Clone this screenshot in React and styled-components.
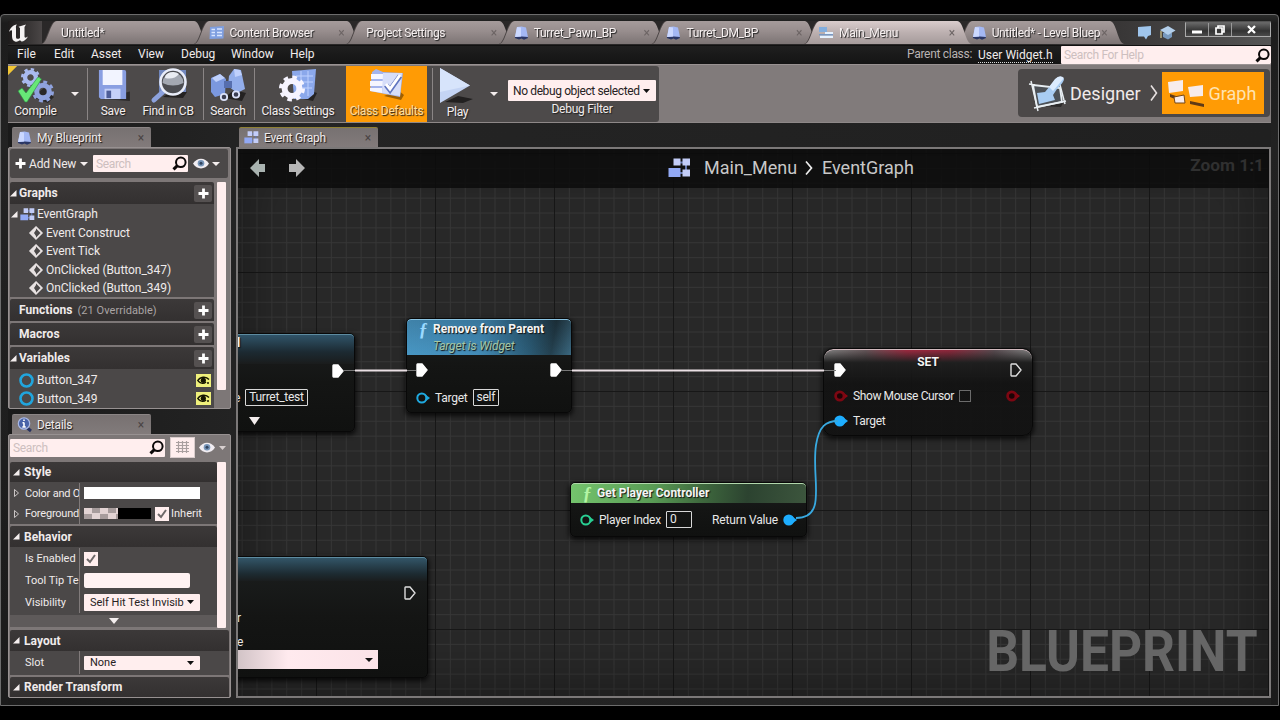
import { createGlobalStyle, styled } from 'styled-components';

const GlobalStyle = createGlobalStyle`
  * {
    box-sizing: border-box;
  }

  body {
    margin: 0;
    background: #000;
    overflow: hidden;
    font-family: Roboto, 'Liberation Sans', sans-serif;
    font-size: 12px;
    color: #f0ebeb;
  }

  svg {
    display: block;
    flex: none;
    overflow: visible;
  }
`;

const Screen = styled.div`
  width: 1280px;
  height: 720px;
  padding-top: 14px;
  background: #000;
`;

const Window = styled.div`
  width: 1279px;
  height: 692px;
  border: 1px solid #6c6c6c;
  border-radius: 4px 4px 0 0;
  background: linear-gradient(#2b2c2b, #1c1c1c 8px, #222 130px, #1b1b1b);
  padding: 6px 7px 0 7px;
  display: flex;
  flex-direction: column;
`;

/* title bar */

const TitleBar = styled.div`
  height: 24px;
  display: flex;
  align-items: flex-end;
  padding-bottom: 1px;
  background: linear-gradient(90deg, #2a2828 1020px, #3a3838 1120px, #555 1262px);
`;

const LogoBox = styled.div`
  width: 34px;
  height: 23px;
  padding: 3px 0 0 1px;
  background: linear-gradient(90deg, #1d1b1b, #4a4646);
`;

const TabEdge = styled.div`
  flex: none;
  width: 167px;
  height: 23px;
  margin-right: -14.4px;
  position: relative;
  z-index: ${(p) => (p.$active ? 2 : 0)};
  filter: drop-shadow(-1px 0 0 #4b4545);
`;

const TabShape = styled.div`
  height: 23px;
  padding: 0 14px 0 ${(p) => (p.$plain ? 19 : 14)}px;
  display: flex;
  align-items: center;
  clip-path: path('M0 23 C6 22 8 0 15 0 H152 C159 0 160 23 167 23 Z');
  background: ${(p) =>
    p.$active
      ? 'linear-gradient(#d9cccc, #bcb0b0 50%, #a59b9b)'
      : 'linear-gradient(#a59b9b, #978d8d 45%, #7c7474)'};
`;

const TabTitle = styled.span`
  flex: 1;
  overflow: hidden;
  white-space: nowrap;
  letter-spacing: -0.35px;
  line-height: 20px;
  margin-left: ${(p) => (p.$icon ? 5 : 0)}px;
  color: #f6f0f0;
  text-shadow: 1px 1px 1px #222;
`;

const TabClose = styled.span`
  color: #6c6464;
  margin: 0 3px 0 1px;
`;

const TitleIcons = styled.div`
  display: flex;
  gap: 8px;
  margin: 0 0 4px 27px;
`;

const WindowButtons = styled.div`
  display: grid;
  grid-template-columns: 23px 23px 38px;
  height: 15px;
  margin: 0 0 7px auto;
  border: 1px solid #aaa;
  border-top-color: #666;
  background: linear-gradient(#666, #333 60%, #4a4a4a);
`;

const WindowButton = styled.div`
  display: flex;
  align-items: center;
  justify-content: center;
  border-right: 1px solid #999;

  &:last-child {
    border-right: none;
  }
`;

/* menu */

const MenuBar = styled.div`
  height: 19px;
  display: flex;
  align-items: center;
  padding-left: 9px;
  background: linear-gradient(#1f1f1f, #141414);
  border-top: 1px solid #111;
`;

const MenuItem = styled.span`
  width: ${(p) => p.$width}px;
  margin-top: -2px;
`;

const ParentClass = styled.span`
  margin: -2px 0 0 auto;
  width: 71px;
  letter-spacing: -0.3px;
  color: #b9b3b3;
  white-space: nowrap;
`;

const ParentLink = styled.span`
  width: 75px;
  line-height: 14px;
  margin: 1px 8px 0 0;
  white-space: nowrap;
  border-bottom: 1px dotted #ddd;
`;

const SearchBox = styled.div`
  width: ${(p) => p.$width}px;
  height: ${(p) => p.$height || 17}px;
  padding: 0 1px 0 3px;
  display: flex;
  align-items: center;
  justify-content: space-between;
  background: #ffeeee;
  border-radius: 1px;
  color: #cdbfbf;
  letter-spacing: -0.35px;
`;

/* toolbar */

const Toolbar = styled.div`
  height: 59px;
  padding: 1px 1px 1px 0;
  display: flex;
  justify-content: space-between;
  background: #817b7b;
  border-top: 1px solid #999292;
  border-bottom: 1px solid #8e8888;
`;

const ToolGroup = styled.div`
  width: 651px;
  height: 56px;
  display: flex;
  align-items: stretch;
  border-radius: 0 3px 3px 0;
  background: linear-gradient(135deg, #f2c636 6px, #4d4a4a 7px);
`;

const ToolButton = styled.div`
  width: ${(p) => p.$width}px;
  margin-right: ${(p) => p.$gap || 0}px;
  display: flex;
  flex-direction: column;
  align-items: center;
  justify-content: space-between;
  padding: 2px 0 3px;
  background: ${(p) => (p.$active ? '#ff9b05' : 'transparent')};
  color: ${(p) => (p.$active ? '#ffdfa0' : '#f4eeee')};
`;

const ToolLabel = styled.span`
  line-height: 16px;
  letter-spacing: -0.25px;
  white-space: nowrap;
  text-shadow: 1px 1px 1px #222;
`;

const ToolCaret = styled.div`
  width: 24px;
  display: flex;
  align-items: center;
  justify-content: center;
`;

const Separator = styled.div`
  width: 1px;
  margin: 2px ${(p) => p.$gap || 0}px 2px 0;
  background: #8a8585;
`;

const DebugFilter = styled.div`
  padding-top: 14px;
  width: 148px;
  margin-left: 2px;
  display: flex;
  flex-direction: column;
  align-items: center;
`;

const Combo = styled.div`
  width: ${(p) => p.$width}px;
  height: ${(p) => p.$height}px;
  padding: 0 6px 0 ${(p) => p.$indent || 6}px;
  display: flex;
  align-items: center;
  justify-content: space-between;
  white-space: nowrap;
  font-size: ${(p) => p.$size || 11}px;
  letter-spacing: ${(p) => p.$spacing || 0}px;
  color: #262222;
  background: #ffeeee;
  border-radius: 1px;
`;

const ModeGroup = styled.div`
  width: 252px;
  height: 48px;
  margin-top: 3px;
  padding: 3px 6px 3px 11px;
  display: flex;
  align-items: center;
  gap: 4px;
  border-radius: 4px;
  background: #4b4848;
  font-size: 18px;
`;

const ModeLabel = styled.span`
  width: 76px;
`;

const GraphMode = styled.div`
  width: 103px;
  height: 42px;
  margin-left: auto;
  padding-left: 6px;
  display: flex;
  align-items: center;
  gap: 4px;
  background: #ff9b05;
  color: #ffe3b0;
`;

/* docked panels */

const Workspace = styled.div`
  flex: 1;
  display: flex;
  gap: 5px;
  padding: 4px 0 7px;
  background: linear-gradient(90deg, #1a1a1a, #242424 20%, #202020);
`;

const SideColumn = styled.div`
  width: 223px;
  display: flex;
  flex-direction: column;
  gap: 5px;
`;

const PanelTab = styled.div`
  width: 139px;
  height: 20px;
  margin-left: ${(p) => p.$left || 4}px;
  padding: 0 7px 0 5px;
  display: flex;
  align-items: center;
  gap: 5px;
  border-radius: 2px 2px 0 0;
  background: linear-gradient(#777171, #827b7b);
  border-top: 1px solid ${(p) => (p.$focus ? '#8f8134' : '#8b8585')};
  text-shadow: 1px 1px 1px #111;
  letter-spacing: -0.2px;
`;

const PanelClose = styled.span`
  margin-left: auto;
  color: #4a4444;
  text-shadow: none;
`;

const Panel = styled.div`
  height: ${(p) => p.$height}px;
  border: 1px solid #979191;
  background: #7d7777;
  border-radius: 2px;
  overflow: hidden;
`;

const BlueprintTools = styled.div`
  height: 29px;
  margin: 1px 2px 4px 1px;
  padding: 0 8px 0 5px;
  display: flex;
  align-items: center;
  background: #4b4848;
  border-radius: 2px;
`;

const AddNew = styled.span`
  width: 51px;
  margin-left: 3px;
  white-space: nowrap;
  letter-spacing: -0.15px;
`;

const ToolGap = styled.div`
  width: ${(p) => p.$width}px;
`;

const DetailTools = styled.div`
  height: 27px;
  padding: 0 4px 2px 1px;
  display: flex;
  align-items: center;
`;

const GridButton = styled.div`
  width: 25px;
  height: 21px;
  margin: 0 4px 0 5px;
  display: flex;
  align-items: center;
  justify-content: center;
  background: #ffeeee;
  border: 1px solid #d9cccc;
`;

const ScrollArea = styled.div`
  display: flex;
`;

const ScrollTrack = styled.div`
  width: 13px;
  padding-left: ${(p) => p.$left}px;
`;

const ScrollThumb = styled.div`
  width: 9px;
  height: ${(p) => p.$height}px;
  background: #ffeeee;
  border-radius: 1px;
`;

const List = styled.div`
  width: ${(p) => p.$width}px;
  margin-left: 1px;
`;

const Category = styled.div`
  height: ${(p) => p.$height || 22}px;
  margin-top: ${(p) => p.$gap || 0}px;
  padding: 0 2px 0 ${(p) => p.$indent || 0}px;
  display: flex;
  align-items: center;
  justify-content: space-between;
  background: linear-gradient(#3c3939, #333030);
  border-radius: 2px 2px 0 0;
  font-weight: 700;
`;

const CategoryName = styled.span`
  display: flex;
  align-items: center;
  gap: ${(p) => p.$gap || 2}px;
  letter-spacing: 0.05px;
`;

const Hint = styled.span`
  margin-left: 3px;
  font-weight: 400;
  font-size: 11px;
  color: #aaa4a4;
`;

const AddButton = styled.div`
  width: 18px;
  height: 17px;
  display: flex;
  align-items: center;
  justify-content: center;
  background: #555151;
  border-radius: 2px;
`;

const Rows = styled.div`
  height: ${(p) => p.$height}px;
  padding-top: ${(p) => p.$top || 0}px;
  overflow: hidden;
  background: #4b4848;
`;

const TreeRow = styled.div`
  height: 18.5px;
  padding: 0 3px 0 ${(p) => p.$indent}px;
  display: flex;
  align-items: center;
  gap: ${(p) => p.$gap || 3}px;
  letter-spacing: -0.05px;
`;

const Watch = styled.div`
  margin-left: auto;
  width: 15px;
  height: 13px;
  display: flex;
  align-items: center;
  justify-content: center;
  background: #eff07c;
`;

const PropRow = styled.div`
  height: ${(p) => p.$height}px;
  display: flex;
  align-items: center;
`;

const PropName = styled.div`
  width: 70px;
  height: 100%;
  padding-left: ${(p) => (p.$arrow ? 4 : 15)}px;
  display: flex;
  align-items: center;
  gap: 6px;
  overflow: hidden;
  white-space: nowrap;
  border-right: 1px solid #807a7a;
  margin-right: 4px;
  font-size: 11px;
  letter-spacing: ${(p) => (p.$arrow ? -0.2 : 0)}px;
`;

const Swatch = styled.div`
  width: 116px;
  height: 12px;
  background: #fff;
`;

const AlphaSwatch = styled.div`
  width: 34px;
  height: 11px;
  background: repeating-conic-gradient(#a79c9c 0 25%, #e2d3d3 0 50%) 0 0 / 16px 11px;
`;

const BlackSwatch = styled.div`
  width: 33px;
  height: 11px;
  background: #000;
  margin-right: 4px;
`;

const Check = styled.div`
  width: 14px;
  height: 14px;
  margin-right: 2px;
  display: flex;
  align-items: center;
  justify-content: center;
  background: #ffeeee;
`;

const TextInput = styled.div`
  width: 106px;
  height: 15px;
  border-radius: 2px;
  background: #fff2f2;
`;

const SmallText = styled.span`
  font-size: 11px;
`;

const Expander = styled.div`
  height: 12px;
  width: 207px;
  display: flex;
  align-items: center;
  justify-content: center;
  background: #5e5a5a;
`;

/* graph editor */

const GraphColumn = styled.div`
  flex: 1;
  display: flex;
  flex-direction: column;
`;

const GraphPanel = styled.div`
  flex: 1;
  border: 2px solid #7b7878;
  position: relative;
  overflow: hidden;
  background-color: #282828;
  background-image:
    linear-gradient(90deg, #171717 1px, transparent 1px),
    linear-gradient(#171717 1px, transparent 1px),
    linear-gradient(90deg, #363636 1px, transparent 1px),
    linear-gradient(#363636 1px, transparent 1px);
  background-size: 119px 119px, 119px 119px, 14.875px 14.875px, 14.875px 14.875px;
  background-position: 78px 4px;
`;

const GraphShade = styled.div`
  position: absolute;
  inset: 0;
  box-shadow: inset 0 0 50px 12px rgba(0, 0, 0, 0.3);
`;

const GraphHeader = styled.div`
  position: relative;
  height: 39px;
  display: flex;
  align-items: center;
  padding: 0 5px 2px 12px;
  background: rgba(12, 12, 12, 0.85);
  font-size: 18px;
  color: #c8c8c8;
`;

const NavArrows = styled.div`
  width: 418px;
  display: flex;
  gap: 22px;
`;

const Crumb = styled.span`
  width: ${(p) => p.$width}px;
  margin-left: ${(p) => p.$left}px;
  white-space: nowrap;
`;

const ZoomLabel = styled.span`
  margin: -5px 0 0 auto;
  font-weight: 700;
  font-size: 17.3px;
  color: #303030;
`;

const Watermark = styled.div`
  position: absolute;
  right: 11px;
  bottom: 12px;
  font-size: 57px;
  line-height: 64px;
  font-weight: 700;
  color: #666;
  transform: scaleX(0.903);
  transform-origin: right;
`;

const Wires = styled.svg`
  position: absolute;
  left: 0;
  top: 0;
`;

const Node = styled.div`
  position: absolute;
  left: ${(p) => p.$x}px;
  top: ${(p) => p.$y}px;
  width: ${(p) => p.$width}px;
  height: ${(p) => p.$height}px;
  border-radius: ${(p) => p.$radius || 5}px;
  border: 1px solid #080808;
  overflow: hidden;
  background: ${(p) => p.$fill || 'linear-gradient(#1c1f1f, #141514 50%, #101110)'};
  box-shadow: 0 2px 5px 1px rgba(0, 0, 0, 0.75);
  color: #e8e8e8;
  letter-spacing: -0.25px;
`;

const NodeHeader = styled.div`
  height: ${(p) => p.$height}px;
  padding: ${(p) => p.$top || 1}px 0 0 ${(p) => p.$indent || 0}px;
  display: flex;
  align-items: flex-start;
  justify-content: ${(p) => (p.$center ? 'center' : 'flex-start')};
  gap: 3px;
  background: ${(p) => p.$fill};
  border-radius: ${(p) => p.$radius || 4}px ${(p) => p.$radius || 4}px 0 0;
  box-shadow: inset 0 1px 0 ${(p) => p.$edge};
`;

const NodeTitle = styled.div`
  font-weight: 700;
  line-height: 17px;
  letter-spacing: 0;
  color: #f5f5f5;
  white-space: nowrap;
  text-shadow: 1px 1px 1px #111;
`;

const NodeSubtitle = styled.div`
  font-style: italic;
  line-height: 16px;
  color: #a5c6a4;
  letter-spacing: -0.15px;
  text-shadow: 1px 1px 1px #111;
`;

const FunctionMark = styled.span`
  width: 14px;
  font-family: 'Liberation Serif', serif;
  font-style: italic;
  font-weight: 700;
  font-size: 18px;
  line-height: 18px;
  text-align: center;
  color: ${(p) => p.$color};
`;

const PinRow = styled.div`
  height: ${(p) => p.$height}px;
  margin-top: ${(p) => p.$top || 0}px;
  padding: 0 ${(p) => p.$right || 9}px 0 ${(p) => p.$left || 9}px;
  display: flex;
  align-items: center;
  justify-content: ${(p) => (p.$between ? 'space-between' : 'flex-start')};
  gap: 5px;
  white-space: nowrap;
`;

const PinGroup = styled.div`
  display: flex;
  align-items: center;
  gap: 5px;
  letter-spacing: ${(p) => p.$spacing || -0.25}px;
`;

const ValueBox = styled.span`
  min-width: ${(p) => p.$width || 0}px;
  height: 17px;
  padding: 0 3px;
  line-height: 15px;
  border: 1px solid #d8d8d8;
  border-radius: 1px;
`;

const BoolBox = styled.span`
  width: 12px;
  height: 12px;
  border: 1px solid #6b6b6b;
`;

const NodeSelect = styled.div`
  width: 150px;
  height: 19px;
  margin-left: -10px;
  padding: 0 5px;
  display: flex;
  align-items: center;
  justify-content: flex-end;
  background: linear-gradient(90deg, #c9bcbf, #ffeaee 40%, #fbe3e8);
`;

/* icons */

const Caret = ({ color = '#f4eeee', width = 8, height = 4 }) => (
  <svg width={width} height={height} viewBox="0 0 8 4" preserveAspectRatio="none">
    <path d="M0 0H8L4 4Z" fill={color} />
  </svg>
);

const Expand = () => (
  <svg width="7" height="7" viewBox="0 0 7 7">
    <path d="M6.5 0V6.5H0Z" fill="#f4eeee" />
  </svg>
);

const Magnifier = () => (
  <svg width="15" height="15" viewBox="0 0 15 15" fill="none" stroke="#0c0909">
    <circle cx="8.8" cy="6.3" r="4.8" strokeWidth="2" />
    <path d="M5.4 9.6L1.5 13.4" strokeWidth="3" />
  </svg>
);

const Plus = () => (
  <svg width="11" height="11" viewBox="0 0 11 11">
    <path d="M5.5 0.5V10.5M0.5 5.5H10.5" stroke="#fff" strokeWidth="2.8" />
  </svg>
);

const Eye = () => (
  <svg width="16" height="11" viewBox="0 0 16 11">
    <path d="M0 5.5C4-1 12-1 16 5.5C12 12 4 12 0 5.5Z" fill="#f1edf2" />
    <circle cx="8" cy="5.3" r="3.3" fill="#7795b8" />
    <circle cx="8" cy="5.3" r="1.5" fill="#31445f" />
  </svg>
);

const SmallEye = () => (
  <svg width="13" height="9" viewBox="0 0 13 9">
    <path d="M0.5 5C3 0.5 9 0 12 3.5M1 5C4 8 7 8 9 6" fill="none" stroke="#151500" strokeWidth="1.4" />
    <circle cx="6.3" cy="4.3" r="2.6" fill="#151500" />
    <path d="M10 7h2" stroke="#151500" strokeWidth="1.3" />
  </svg>
);

const BookIcon = () => (
  <svg width="15" height="14" viewBox="0 0 15 14">
    <path d="M1.5 9L0.8 12L5 13.5L7.5 12.5L10 13.8L14 12L13 9Z" fill="#2b3765" />
    <path d="M3 1L7.5 0.5L12 1.5L14 11L8 10.5L1 11Z" fill="#a4b8f4" />
    <path d="M3 1L7 1.5L7 10.5L1 11Z" fill="#cbd8ff" />
  </svg>
);

const BrowserIcon = () => (
  <svg width="16" height="14" viewBox="0 0 16 14">
    <path d="M1 1L15 0L14.5 12.5L0.5 13Z" fill="#7f9fe0" />
    <path d="M2.5 3.5H6M8 3H13M2.5 6.5H6M8 6.5H13M2.5 9.5H6M8 9.5H13" stroke="#d9e5ff" strokeWidth="1.7" />
  </svg>
);

const WidgetIcon = () => (
  <svg width="15" height="13" viewBox="0 0 15 13">
    <path d="M0 1H8V6H0Z" fill="#83aede" />
    <path d="M6 6H14V8H6ZM1 9.5H14V12H1Z" fill="#e6f2ff" />
    <path d="M0 8H14V9.5H0Z" fill="#7998c2" />
  </svg>
);

const GraphIcon = ({ width = 15, height = 13 }) => (
  <svg width={width} height={height} viewBox="0 0 22 20">
    <path d="M9 4.5H20M5 15H18M17.5 4V16" stroke="#6477ad" strokeWidth="2" />
    <path d="M5 0.5H12V7.5H5ZM14 0.5H21.5V7.5H14ZM14 11.5H21.5V18.5H14Z" fill="#c3cdf8" />
    <path d="M0 10H12V19H0Z" fill="#92a9f4" />
  </svg>
);

const InfoIcon = () => (
  <svg width="15" height="15" viewBox="0 0 15 15">
    <path d="M9 10L14 14" stroke="#27325f" strokeWidth="3" />
    <circle cx="7" cy="6.5" r="5.7" fill="#4963a8" stroke="#a9b8e4" strokeWidth="1.2" />
    <path d="M7 5.5V10M7 2.6V4.1M5.5 5.8H7M5.3 10H8.8" stroke="#fff" strokeWidth="1.6" />
  </svg>
);

const EventIcon = () => (
  <svg width="14" height="14" viewBox="0 0 14 14">
    <path d="M7 1.2L12.8 7L7 12.8L1.2 7Z" fill="none" stroke="#e7e1e1" strokeWidth="1.8" />
    <path d="M7 1L1 7L7 13V10L5 7L7 4Z" fill="#e7e1e1" />
  </svg>
);

const Gear = ({ x, y, r, fill }) => (
  <g transform={`translate(${x} ${y})`}>
    <circle r={r * 0.57} fill="none" stroke={fill} strokeWidth={r * 0.46} />
    <circle r={r * 0.87} fill="none" stroke={fill} strokeWidth={r * 0.26} strokeDasharray={`${r * 0.35} ${r * 0.333}`} />
  </g>
);

const CompileIcon = () => (
  <svg width="36" height="35" viewBox="0 0 36 35">
    <path d="M14 29L30 35L36 29L26 20Z" fill="#2a2828" />
    <Gear x={12.5} y={9.5} r={9.5} fill="#a9baf0" />
    <Gear x={25} y={23.5} r={11} fill="#8fa2de" />
    <path d="M0 23L4 20L8 25L20 9L23.5 11L9 34L7 34Z" fill="#67e777" stroke="#2c8d41" strokeWidth="0.6" />
  </svg>
);

const SaveIcon = () => (
  <svg width="30" height="34" viewBox="0 0 32 34">
    <path d="M4 32L34 34V24Z" fill="#2c2a2a" />
    <path d="M1 1H28Q30 1 30 3V32H3L1 30Z" fill="#8a9fe2" />
    <path d="M5 1H26V17H5Z" fill="#f2f4ff" />
    <path d="M7 21H24V32H7Z" fill="#c5d0f8" />
    <path d="M9 23H14V31H9Z" fill="#4d5d98" />
  </svg>
);

const FindIcon = () => (
  <svg width="38" height="35" viewBox="0 0 38 35">
    <path d="M14 29L34 30L38 24L28 20Z" fill="#242222" />
    <path d="M10 2H37V24H10Z" fill="#7187bd" />
    <path d="M15 23L5 32" stroke="#8da2dd" strokeWidth="5" strokeLinecap="round" />
    <circle cx="24" cy="14" r="12.5" fill="#4c4d52" stroke="#e9edf9" strokeWidth="2.6" />
    <path d="M13.5 15A10.5 10.5 0 0 1 34.5 15Q24 20 13.5 15Z" fill="#a3a8b2" />
    <path d="M16 10A8 6 0 0 1 30 6Q25 12 16 10Z" fill="#e9ecf2" />
  </svg>
);

const SearchIcon = () => (
  <svg width="36" height="34" viewBox="0 0 36 34">
    <path d="M14 30L32 33L36 25L24 22Z" fill="#232121" />
    <path d="M1 10L10 6L16 11L15 26L5 29L1 24Z" fill="#7b98df" />
    <path d="M19 8L24 1L31 2L35 21L27 25L18 18Z" fill="#93aeeb" />
    <path d="M14 13H22V20H14Z" fill="#566eae" />
    <path d="M2 10L10 6L15 10L6 14ZM24 1L30 2L32 7L25 9Z" fill="#bfd0fc" />
    <circle cx="14" cy="29" r="3.2" fill="#3b3e52" stroke="#dbe2fa" strokeWidth="1.8" />
    <circle cx="26" cy="26.5" r="3.2" fill="#3b3e52" stroke="#dbe2fa" strokeWidth="1.8" />
  </svg>
);

const SettingsIcon = () => (
  <svg width="38" height="34" viewBox="0 0 38 34">
    <path d="M19 30L34 33L38 25L26 21Z" fill="#252323" />
    <path d="M13 3L37 1L35 26L29 31H15Z" fill="#8ba8eb" />
    <path d="M17 8H34M17 14H34M17 20H33M22 3V24M29 3V28" stroke="#bed1ff" strokeWidth="1" />
    <Gear x={13} y={20.5} r={13} fill="#f6f4ff" />
  </svg>
);

const DefaultsIcon = () => (
  <svg width="38" height="32" viewBox="0 0 38 32">
    <path d="M16 28L33 32L36 27L30 22Z" fill="#a06000" />
    <path d="M4 4L8 1L15 4L35 5L32 29L2 23Z" fill="#a3b4ed" />
    <path d="M3 6H15V11H3ZM2 13H15V18H2ZM2 20H14V25L2 23Z" fill="#f5f6ff" />
    <path d="M15 5L34 5L32 28L14 25Z" fill="#d6def9" />
    <path d="M18 17L22 22L32 8" fill="none" stroke="#5f75bf" strokeWidth="5" />
    <path d="M18 16L22 21L32 7" fill="none" stroke="#fff" strokeWidth="3" />
  </svg>
);

const PlayIcon = () => (
  <svg width="38" height="36" viewBox="0 0 38 36">
    <path d="M6 34L19 28L34 31L24 35Z" fill="#222020" />
    <path d="M1 0L31 17.5L1 35Z" fill="#c4d4f4" />
    <path d="M1 0L31 17.5L1 24Z" fill="#d7e4fb" />
  </svg>
);

const DesignerIcon = () => (
  <svg width="37" height="37" viewBox="0 0 37 37">
    <path d="M10 31L32 32L36 24Z" fill="#2c2a2a" />
    <path d="M4 10L31 13L33 27L8 32Z" fill="#4c5157" stroke="#e8eef2" strokeWidth="1.8" />
    <path d="M0 9L6 10M2 6L9 36M31 10L36 29M5 33L37 26" stroke="#e8eef2" strokeWidth="1.5" />
    <path d="M8 18L16 17L26 5Q31 -1 35 4Q35 7 28 14L24 20L26 25L10 29Z" fill="#a9cdf3" />
    <path d="M26 4Q31 -1 35 3L24 16L20 12Z" fill="#dcecff" />
  </svg>
);

const NodesIcon = () => (
  <svg width="37" height="27" viewBox="0 0 37 27">
    <path d="M2 14L8 16L7 19L2 17ZM22 21L36 24V27L22 24Z" fill="#5f3a17" />
    <path d="M0 2L15 0V11L1 13Z" fill="#f7ecec" />
    <path d="M20 7L35 5V16L22 17Z" fill="#f7ecec" />
    <path d="M6 17L16 15L17 23L7 23Z" fill="#f7ecec" stroke="#754614" strokeWidth="1" />
  </svg>
);

const ExecPin = ({ open }) => (
  <svg width="12" height="14" viewBox="0 0 12 14">
    <path
      d="M1.5 1H6L11 7L6 13H1.5Q1 13 1 12V2Q1 1 1.5 1Z"
      fill={open ? 'none' : '#fff'}
      stroke={open ? '#ddd' : '#fff'}
      strokeWidth="1.4"
    />
  </svg>
);

const DataPin = ({ color, filled, hole = '#121312' }) => (
  <svg width="14" height="12" viewBox="0 0 14 12">
    <path d="M10 3L14 6L10 9Z" fill={color} />
    <circle cx="5.8" cy="6" r="4.5" fill={filled ? color : hole} stroke={color} strokeWidth="2" />
  </svg>
);

const BoolPin = () => (
  <svg width="14" height="12" viewBox="0 0 14 12">
    <path d="M10 3L14 6L10 9Z" fill="#8e0712" />
    <circle cx="5.8" cy="6" r="4.2" fill="#1c0305" stroke="#7c0712" strokeWidth="2.8" />
  </svg>
);

const PropArrow = () => (
  <svg width="5" height="8" viewBox="0 0 5 8">
    <path d="M0.5 0.5L4.5 4L0.5 7.5Z" fill="none" stroke="#d8d2d2" strokeWidth="0.9" />
  </svg>
);

const CheckMark = () => (
  <svg width="10" height="9" viewBox="0 0 10 9">
    <path d="M1 5L4 8L9 1" fill="none" stroke="#6e6969" strokeWidth="2" />
  </svg>
);

const tabs = [
  { title: 'Untitled*', plain: true },
  { title: 'Content Browser', icon: <BrowserIcon />, close: true },
  { title: 'Project Settings', plain: true, close: true },
  { title: 'Turret_Pawn_BP', icon: <BookIcon />, close: true },
  { title: 'Turret_DM_BP', icon: <BookIcon />, close: true },
  { title: 'Main_Menu', icon: <WidgetIcon />, close: true, active: true },
  { title: 'Untitled* - Level Bluep', icon: <BookIcon />, close: true },
];

const menu = [
  ['File', 37],
  ['Edit', 37],
  ['Asset', 47],
  ['View', 43],
  ['Debug', 50],
  ['Window', 59],
  ['Help', 40],
];

const events = ['Event Construct', 'Event Tick', 'OnClicked (Button_347)', 'OnClicked (Button_349)'];

const Title = () => (
  <TitleBar>
    <LogoBox>
      <svg width="21" height="18" viewBox="0 0 21 18">
        <path
          d="M0 8C1 4 4 1 8 0.5C6.5 2 7 3 7 4.5V13C7 15 9 15.5 11 14V4L9.5 2.8L17 0.5L15.5 3V12.5C15.5 14 17 14 19 12.5C17 16 14 17.8 12.5 17.5L11 16.3C9 17.5 8 18 6 17.5C4 17 3 15 3 12V7C3 5.5 1.5 6 0 8Z"
          fill="#f5f3f3"
        />
      </svg>
    </LogoBox>
    {tabs.map((tab) => (
      <TabEdge key={tab.title} $active={tab.active}>
        <TabShape $active={tab.active} $plain={tab.plain}>
          {tab.icon}
          <TabTitle $icon={tab.icon}>{tab.title}</TabTitle>
          {tab.close && <TabClose>×</TabClose>}
        </TabShape>
      </TabEdge>
    ))}
    <TitleIcons>
      <svg width="15" height="14" viewBox="0 0 15 14">
        <path d="M1 1L14 0V9L11 10L9 13.5L7 10.5H1Z" fill="#9fc5ec" />
      </svg>
      <svg width="16" height="14" viewBox="0 0 16 14">
        <path d="M3 7V11L8 13.5L12 11V7Z" fill="#7899bd" />
        <path d="M0 4L8 0L15.5 4.5L8 9Z" fill="#b3cfeb" />
        <path d="M1 5V12" stroke="#cbbf8a" strokeWidth="1.3" />
      </svg>
    </TitleIcons>
    <WindowButtons>
      <WindowButton>
        <svg width="10" height="9" viewBox="0 0 10 9">
          <path d="M0 7H10" stroke="#fff" strokeWidth="3" />
        </svg>
      </WindowButton>
      <WindowButton>
        <svg width="10" height="10" viewBox="0 0 10 10">
          <path d="M3 2.5V1H9V7H7.5M1 3H7V9H1Z" fill="none" stroke="#fff" strokeWidth="1.7" />
        </svg>
      </WindowButton>
      <WindowButton>
        <svg width="9" height="9" viewBox="0 0 9 9">
          <path d="M1 1L8 8M8 1L1 8" stroke="#fff" strokeWidth="2.3" />
        </svg>
      </WindowButton>
    </WindowButtons>
  </TitleBar>
);

const Tools = () => (
  <Toolbar>
    <ToolGroup>
      <ToolButton $width={55}>
        <CompileIcon />
        <ToolLabel>Compile</ToolLabel>
      </ToolButton>
      <ToolCaret>
        <Caret />
      </ToolCaret>
      <Separator />
      <ToolButton $width={50}>
        <SaveIcon />
        <ToolLabel>Save</ToolLabel>
      </ToolButton>
      <ToolButton $width={60} $gap={5}>
        <FindIcon />
        <ToolLabel>Find in CB</ToolLabel>
      </ToolButton>
      <Separator />
      <ToolButton $width={48} $gap={2}>
        <SearchIcon />
        <ToolLabel>Search</ToolLabel>
      </ToolButton>
      <Separator $gap={3} />
      <ToolButton $width={80} $gap={8}>
        <SettingsIcon />
        <ToolLabel>Class Settings</ToolLabel>
      </ToolButton>
      <ToolButton $width={81} $gap={5} $active>
        <DefaultsIcon />
        <ToolLabel>Class Defaults</ToolLabel>
      </ToolButton>
      <Separator />
      <ToolButton $width={49}>
        <PlayIcon />
        <ToolLabel>Play</ToolLabel>
      </ToolButton>
      <ToolCaret>
        <Caret />
      </ToolCaret>
      <DebugFilter>
        <Combo $width={148} $height={21} $size={12} $indent={5} $spacing={-0.38}>
          No debug object selected
          <Caret color="#111" width={7} />
        </Combo>
        <ToolLabel>Debug Filter</ToolLabel>
      </DebugFilter>
    </ToolGroup>
    <ModeGroup>
      <DesignerIcon />
      <ModeLabel>Designer</ModeLabel>
      <svg width="8" height="16" viewBox="0 0 8 16">
        <path d="M1 0.5L6.5 8L1 15.5" fill="none" stroke="#e6e0e0" strokeWidth="1.6" />
      </svg>
      <GraphMode>
        <NodesIcon />
        Graph
      </GraphMode>
    </ModeGroup>
  </Toolbar>
);

const MyBlueprint = () => (
  <div>
    <PanelTab>
      <BookIcon />
      My Blueprint
      <PanelClose>×</PanelClose>
    </PanelTab>
    <Panel $height={262}>
      <BlueprintTools>
        <Plus />
        <AddNew>Add New</AddNew>
        <Caret />
        <ToolGap $width={5} />
        <SearchBox $width={95}>
          Search
          <Magnifier />
        </SearchBox>
        <ToolGap $width={5} />
        <Eye />
        <ToolGap $width={3} />
        <Caret />
      </BlueprintTools>
      <ScrollArea>
        <List $width={204}>
          <Category>
            <CategoryName>
              <Expand />
              Graphs
            </CategoryName>
            <AddButton>
              <Plus />
            </AddButton>
          </Category>
          <Rows $height={93} $top={1}>
            <TreeRow $indent={1} $gap={2}>
              <Expand />
              <GraphIcon />
              EventGraph
            </TreeRow>
            {events.map((name) => (
              <TreeRow key={name} $indent={19}>
                <EventIcon />
                {name}
              </TreeRow>
            ))}
          </Rows>
          <Category $gap={2} $indent={9}>
            <CategoryName>
              Functions
              <Hint>(21 Overridable)</Hint>
            </CategoryName>
            <AddButton>
              <Plus />
            </AddButton>
          </Category>
          <Category $gap={2} $indent={9}>
            <CategoryName>Macros</CategoryName>
            <AddButton>
              <Plus />
            </AddButton>
          </Category>
          <Category $gap={2}>
            <CategoryName>
              <Expand />
              Variables
            </CategoryName>
            <AddButton>
              <Plus />
            </AddButton>
          </Category>
          <Rows $height={39} $top={2}>
            {['Button_347', 'Button_349'].map((name) => (
              <TreeRow key={name} $indent={9}>
                <svg width="15" height="15" viewBox="0 0 15 15">
                  <circle cx="7.5" cy="7.5" r="6" fill="none" stroke="#21a5dd" strokeWidth="2.6" />
                </svg>
                {name}
                <Watch>
                  <SmallEye />
                </Watch>
              </TreeRow>
            ))}
          </Rows>
        </List>
        <ScrollTrack $left={3}>
          <ScrollThumb $height={208} />
        </ScrollTrack>
      </ScrollArea>
    </Panel>
  </div>
);

const Details = () => (
  <div>
    <PanelTab>
      <InfoIcon />
      Details
      <PanelClose>×</PanelClose>
    </PanelTab>
    <Panel $height={264}>
      <DetailTools>
        <SearchBox $width={156} $height={18}>
          Search
          <Magnifier />
        </SearchBox>
        <GridButton>
          <svg width="13" height="13" viewBox="0 0 13 13">
            <path
              d="M0 1.5H13M0 4.5H13M0 7.5H13M0 10.5H13M2.5 0V12M6.5 0V12M10.5 0V12"
              stroke="#aaa0a0"
              strokeWidth="1.2"
            />
          </svg>
        </GridButton>
        <Eye />
        <ToolGap $width={4} />
        <Caret width={7} color="#d8d0d0" />
      </DetailTools>
      <ScrollArea>
        <List $width={207}>
          <Category $height={20} $indent={3}>
            <CategoryName $gap={4}>
              <Expand />
              Style
            </CategoryName>
          </Category>
          <Rows $height={42} $top={1}>
            <PropRow $height={20.5}>
              <PropName $arrow>
                <PropArrow />
                Color and O
              </PropName>
              <Swatch />
            </PropRow>
            <PropRow $height={20.5}>
              <PropName $arrow>
                <PropArrow />
                Foreground
              </PropName>
              <AlphaSwatch />
              <BlackSwatch />
              <Check>
                <CheckMark />
              </Check>
              <SmallText>Inherit</SmallText>
            </PropRow>
          </Rows>
          <Category $height={21} $gap={2} $indent={3}>
            <CategoryName $gap={4}>
              <Expand />
              Behavior
            </CategoryName>
          </Category>
          <Rows $height={68} $top={1}>
            <PropRow $height={21}>
              <PropName>Is Enabled</PropName>
              <Check>
                <CheckMark />
              </Check>
            </PropRow>
            <PropRow $height={22}>
              <PropName>Tool Tip Te:</PropName>
              <TextInput />
            </PropRow>
            <PropRow $height={22}>
              <PropName>Visibility</PropName>
              <Combo $width={116} $height={17}>
                Self Hit Test Invisib
                <Caret color="#111" width={7} />
              </Combo>
            </PropRow>
          </Rows>
          <Expander>
            <Caret width={10} height={6} />
          </Expander>
        </List>
        <ScrollTrack $left={0}>
          <ScrollThumb $height={166} />
        </ScrollTrack>
      </ScrollArea>
      <List $width={219}>
        <Category $height={21} $gap={2} $indent={3}>
          <CategoryName $gap={4}>
            <Expand />
            Layout
          </CategoryName>
        </Category>
        <Rows $height={24}>
          <PropRow $height={23}>
            <PropName>Slot</PropName>
            <Combo $width={116} $height={14}>
              None
              <Caret color="#111" width={7} />
            </Combo>
          </PropRow>
        </Rows>
        <Category $height={20} $gap={2} $indent={3}>
          <CategoryName $gap={4}>
            <Expand />
            Render Transform
          </CategoryName>
        </Category>
      </List>
    </Panel>
  </div>
);

/* node positions are relative to the graph viewport */
const Graph = () => (
  <GraphColumn>
    <PanelTab $focus $left={3}>
      <GraphIcon />
      Event Graph
      <PanelClose>×</PanelClose>
    </PanelTab>
    <GraphPanel>
      <GraphShade />
      <GraphHeader>
        <NavArrows>
          <svg width="16" height="20" viewBox="0 0 16 20">
            <path d="M0 10L9 1V6H15V14H9V19Z" fill="#a9b3b0" />
          </svg>
          <svg width="18" height="20" viewBox="0 0 18 20">
            <path d="M17 10L8 1V6H1V14H8V19Z" fill="#b6b6b6" />
          </svg>
        </NavArrows>
        <GraphIcon width={23} height={20} />
        <Crumb $left={13} $width={101}>
          Main_Menu
        </Crumb>
        <svg width="8" height="14" viewBox="0 0 8 14">
          <path d="M1 0.5L6.5 7L1 13.5" fill="none" stroke="#eee" strokeWidth="1.7" />
        </svg>
        <Crumb $left={9} $width={100}>
          EventGraph
        </Crumb>
        <ZoomLabel>Zoom 1:1</ZoomLabel>
      </GraphHeader>
      <Watermark>BLUEPRINT</Watermark>

      <Node $x={-60} $y={184} $width={177} $height={99}>
        <NodeHeader $height={30} $indent={58} $fill="linear-gradient(#31566c, #1c2a32 60%, #1a1c1c)" $edge="#5d8ba0">
          <NodeTitle>l</NodeTitle>
        </NodeHeader>
        <PinRow $height={14} $left={153}>
          <ExecPin />
        </PinRow>
        <PinRow $height={17} $top={11} $left={55}>
          e
          <ValueBox>Turret_test</ValueBox>
        </PinRow>
        <PinRow $height={8} $top={11} $left={70}>
          <Caret width={11} height={8} />
        </PinRow>
      </Node>

      <Node $x={168} $y={169} $width={166} $height={95}>
        <NodeHeader
          $height={36}
          $indent={9}
          $top={2}
          $fill="linear-gradient(rgba(20, 40, 50, 0.15), rgba(90, 190, 240, 0.15)), linear-gradient(100deg, #4691bd, #3f83ad 45%, #234a60 75%, #1b2c35 88%, #35596c)"
          $edge="#8bc4e2"
        >
          <FunctionMark $color="#9ad9ff">ƒ</FunctionMark>
          <div>
            <NodeTitle>Remove from Parent</NodeTitle>
            <NodeSubtitle>Target is Widget</NodeSubtitle>
          </div>
        </NodeHeader>
        <PinRow $height={14} $top={8} $right={9} $between>
          <ExecPin />
          <ExecPin />
        </PinRow>
        <PinRow $height={17} $top={12}>
          <DataPin color="#1fa9df" />
          Target
          <ValueBox>self</ValueBox>
        </PinRow>
      </Node>

      <Node
        $x={585}
        $y={199}
        $width={210}
        $height={88}
        $radius={10}
        $fill="linear-gradient(rgba(38, 38, 38, 0.9), rgba(18, 18, 18, 0.93) 40%)"
      >
        <NodeHeader
          $height={14}
          $center
          $top={5}
          $radius={9}
          $fill="linear-gradient(rgba(32, 32, 32, 0), #202020 95%), linear-gradient(90deg, #8a8a8a 0, #6a5a5d 20%, #a52a42 40%, #98283e 60%, #5e5055 82%, #8a8a8a)"
          $edge="#d0b8bd"
        >
          <NodeTitle>SET</NodeTitle>
        </NodeHeader>
        <PinRow $height={14} $left={10} $right={10} $between>
          <ExecPin />
          <ExecPin open />
        </PinRow>
        <PinRow $height={16} $top={11} $left={10} $right={12} $between>
          <PinGroup $spacing={-0.4}>
            <BoolPin />
            Show Mouse Cursor
            <BoolBox />
          </PinGroup>
          <BoolPin />
        </PinRow>
        <PinRow $height={16} $top={9} $left={10}>
          <DataPin color="#1eaeff" filled />
          Target
        </PinRow>
      </Node>

      <Node $x={332} $y={333} $width={237} $height={55}>
        <NodeHeader
          $height={20}
          $indent={9}
          $top={2}
          $fill="linear-gradient(95deg, #74c46d, #599c55 35%, #3f6a3e 55%, #2c4330 75%, #3c553d)"
          $edge="#b2d8ac"
        >
          <FunctionMark $color="#b4f5a4">ƒ</FunctionMark>
          <NodeTitle>Get Player Controller</NodeTitle>
        </NodeHeader>
        <PinRow $height={17} $top={8} $right={9} $between>
          <PinGroup>
            <DataPin color="#29cf93" />
            Player Index
            <ValueBox $width={26}>0</ValueBox>
          </PinGroup>
          <PinGroup $spacing={-0.15}>
            Return Value
            <DataPin color="#1eaeff" filled />
          </PinGroup>
        </PinRow>
      </Node>

      <Node $x={-60} $y={407} $width={250} $height={122}>
        <NodeHeader $height={24} $fill="linear-gradient(#34586b, #1d2b32 70%, #1a1d1e)" $edge="#5d8ba0" />
        <PinRow $height={14} $top={5} $left={225}>
          <ExecPin open />
        </PinRow>
        <PinRow $height={16} $top={10} $left={58}>
          r
        </PinRow>
        <PinRow $height={16} $top={8} $left={58}>
          e
        </PinRow>
        <PinRow $height={19} $left={59}>
          <NodeSelect>
            <Caret color="#111" />
          </NodeSelect>
        </PinRow>
      </Node>

      <Wires width="1034" height="547" fill="none">
        <path d="M117 221.5H169M334 221.5H586" stroke="#eadfe4" strokeWidth="2" />
        <path d="M106 221.5H117M169 221.5H178M324 221.5H334M586 221.5H598" stroke="#777" strokeWidth="1" />
        <path d="M558 369C590 369 573 330 578 296C581 277 588 272 600 272" stroke="#38a9e0" strokeWidth="1.8" />
      </Wires>
    </GraphPanel>
  </GraphColumn>
);

const App = () => {
  return (
    <>
      <GlobalStyle />
      <Screen>
        <Window>
          <Title />
          <MenuBar>
            {menu.map(([name, width]) => (
              <MenuItem key={name} $width={width}>
                {name}
              </MenuItem>
            ))}
            <ParentClass>Parent class:</ParentClass>
            <ParentLink>User Widget.h</ParentLink>
            <SearchBox $width={210} $height={18}>
              Search For Help
              <Magnifier />
            </SearchBox>
          </MenuBar>
          <Tools />
          <Workspace>
            <SideColumn>
              <MyBlueprint />
              <Details />
            </SideColumn>
            <Graph />
          </Workspace>
        </Window>
      </Screen>
    </>
  );
};

export default App;
